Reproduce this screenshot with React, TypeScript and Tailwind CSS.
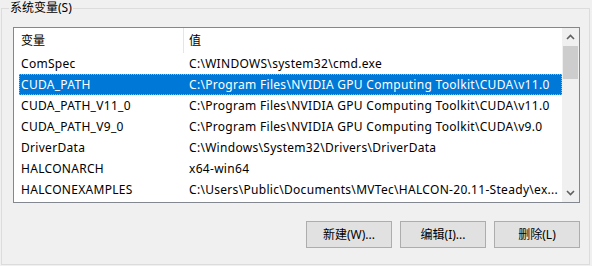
import React from "react";

const rows: [string, string][] = [
  ["ComSpec", "C:\\WINDOWS\\system32\\cmd.exe"],
  ["CUDA_PATH", "C:\\Program Files\\NVIDIA GPU Computing Toolkit\\CUDA\\v11.0"],
  ["CUDA_PATH_V11_0", "C:\\Program Files\\NVIDIA GPU Computing Toolkit\\CUDA\\v11.0"],
  ["CUDA_PATH_V9_0", "C:\\Program Files\\NVIDIA GPU Computing Toolkit\\CUDA\\v9.0"],
  ["DriverData", "C:\\Windows\\System32\\Drivers\\DriverData"],
  ["HALCONARCH", "x64-win64"],
  ["HALCONEXAMPLES", "C:\\Users\\Public\\Documents\\MVTec\\HALCON-20.11-Steady\\ex..."],
];

const font = { fontFamily: '"Noto Sans", "Noto Sans CJK SC", sans-serif' };

function Chevron({ up }: { up?: boolean }) {
  return (
    <svg width="9" height="6" viewBox="0 0 9 6" className="block">
      <path
        d={up ? "M1 5 L4.5 1.5 L8 5" : "M1 1 L4.5 4.5 L8 1"}
        fill="none"
        stroke="#606060"
        strokeWidth="1.6"
      />
    </svg>
  );
}

export default function App() {
  return (
    <div
      className="w-[592px] h-[266px] bg-[#f0f0f0] pt-[8px] pl-[1px] text-[12px] text-black overflow-hidden"
      style={font}
    >
      {/* group box */}
      <div className="relative w-[589px] h-[257px] border border-[#dcdcdc] pl-[11px] pt-[18px]">
        <span className="absolute left-[7px] top-[-10px] px-[1px] bg-[#f0f0f0] leading-[18px]">
          系统变量(S)
        </span>

        {/* list view */}
        <div className="flex w-[567px] h-[176px] border border-[#828790] bg-white">
          <div className="flex-1 flex flex-col">
            <div className="flex h-[25px] items-center">
              <div className="w-[170px] h-full flex items-center pl-[7px] border-r border-[#e5e5e5]">变量</div>
              <div className="pl-[5px]">值</div>
            </div>
            {rows.map(([name, value], i) => {
              const selected = i === 1;
              return (
                <div key={name} className="flex h-[21px] pl-[5px] tracking-[0.3px]">
                  <div
                    className={
                      selected
                        ? "flex flex-1 items-center bg-[#0078d7] text-white border border-dotted border-[#f0a050]"
                        : "flex flex-1 items-center border border-transparent"
                    }
                  >
                    <div className="w-[169px] pl-[1px] whitespace-nowrap">{name}</div>
                    <div className="whitespace-nowrap">{value}</div>
                  </div>
                </div>
              );
            })}
          </div>

          {/* scrollbar */}
          <div className="w-[17px] flex flex-col items-center bg-[#f0f0f0]">
            <div className="h-[18px] w-full flex items-center justify-center">
              <Chevron up />
            </div>
            <div className="w-[15px] h-[33px] bg-[#cdcdcd]" />
            <div className="flex-1" />
            <div className="h-[18px] w-full flex items-center justify-center">
              <Chevron />
            </div>
          </div>
        </div>

        {/* buttons */}
        <div className="flex justify-end gap-[8px] w-[567px] mt-[18px]">
          {["新建(W)...", "编辑(I)...", "删除(L)"].map((t) => (
            <button
              key={t}
              className="w-[86px] h-[27px] bg-[#e1e1e1] border border-[#adadad] flex items-center justify-center"
            >
              {t}
            </button>
          ))}
        </div>
      </div>
    </div>
  );
}
